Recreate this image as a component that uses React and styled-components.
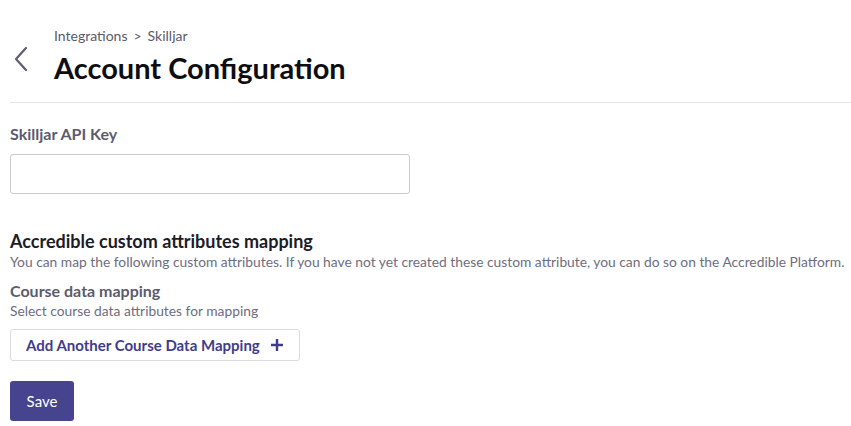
import styled, { createGlobalStyle } from "styled-components";

const GlobalStyle = createGlobalStyle`
  body {
    margin: 0;
    background: #fff;
    font-family: "Lato", "Noto Sans", sans-serif;
  }
`;

function ChevronLeft() {
  return (
    <svg width="16" height="26" viewBox="0 0 16 26" fill="none">
      <path d="M13 2 L3 13 L13 24" stroke="#5f5d72" strokeWidth="2.2" strokeLinecap="round" strokeLinejoin="round" />
    </svg>
  );
}

function PlusIcon() {
  return (
    <svg width="14" height="14" viewBox="0 0 14 14">
      <path d="M7 1 V13 M1 7 H13" stroke="#3f3c8c" strokeWidth="2.4" />
    </svg>
  );
}

export default function App() {
  return (
    <>
      <GlobalStyle />
      <Page>
        <Header>
          <BackButton aria-label="Back">
            <ChevronLeft />
          </BackButton>
          <div>
            <Breadcrumb>
              Integrations<Separator>&gt;</Separator>Skilljar
            </Breadcrumb>
            <Title>Account Configuration</Title>
          </div>
        </Header>
        <Divider />

        <Field>
          <Label>Skilljar API Key</Label>
          <Input type="text" />
        </Field>

        <Section>
          <SectionTitle>Accredible custom attributes mapping</SectionTitle>
          <Hint>
            You can map the following custom attributes. If you have not yet created these custom attribute, you can do so on the Accredible Platform.
          </Hint>
          <SubTitle>Course data mapping</SubTitle>
          <Hint>Select course data attributes for mapping</Hint>
          <OutlineButton>
            Add Another Course Data Mapping
            <PlusIcon />
          </OutlineButton>
        </Section>

        <PrimaryButton>Save</PrimaryButton>
      </Page>
    </>
  );
}

// ====== Styles ======
const Page = styled.main`
  padding: 26px 0 0 10px;
`;

const Header = styled.header`
  display: flex;
  align-items: flex-start;
  gap: 25px;
`;

const BackButton = styled.button`
  border: 0;
  background: none;
  padding: 0;
  margin: 20px 0 0 3px;
  cursor: pointer;
  display: flex;
`;

const Breadcrumb = styled.div`
  font-size: 14px;
  line-height: 20px;
  color: #5b5a6b;
`;

const Separator = styled.span`
  margin: 0 6px;
`;

const Title = styled.h1`
  margin: 4px 0 0;
  font-size: 29px;
  line-height: 36px;
  font-weight: 700;
  color: #0d0d12;
`;

const Divider = styled.hr`
  border: 0;
  border-top: 1px solid #e6e6ea;
  margin: 16px 0 0;
`;

const Field = styled.div`
  display: flex;
  flex-direction: column;
  gap: 10px;
  padding-top: 21px;
`;

const Label = styled.label`
  font-size: 16px;
  line-height: 20px;
  font-weight: 700;
  color: #5c5b6e;
`;

const Input = styled.input`
  box-sizing: border-box;
  width: 400px;
  height: 40px;
  border: 1px solid #c9c9cf;
  border-radius: 3px;
`;

const Section = styled.section`
  padding-top: 36px;
`;

const SectionTitle = styled.h2`
  margin: 0;
  font-size: 18px;
  line-height: 22px;
  font-weight: 700;
  color: #1d1c28;
`;

const Hint = styled.p`
  margin: 0;
  font-size: 13.8px;
  line-height: 19px;
  color: #6e6d80;
`;

const SubTitle = styled.h3`
  margin: 10px 0 0;
  font-size: 16px;
  line-height: 20px;
  font-weight: 700;
  color: #5c5b6e;
`;

const OutlineButton = styled.button`
  display: inline-flex;
  align-items: center;
  gap: 10px;
  margin-top: 9px;
  height: 32px;
  padding: 0 15px;
  border: 1px solid #dcdce0;
  border-radius: 3px;
  background: #fff;
  font-family: inherit;
  font-size: 15px;
  font-weight: 700;
  color: #3f3c8c;
  cursor: pointer;
`;

const PrimaryButton = styled.button`
  display: block;
  margin-top: 20px;
  width: 64px;
  height: 40px;
  border: 0;
  border-radius: 3px;
  background: #47448f;
  font-family: inherit;
  font-size: 15px;
  color: #fff;
  cursor: pointer;
`;
